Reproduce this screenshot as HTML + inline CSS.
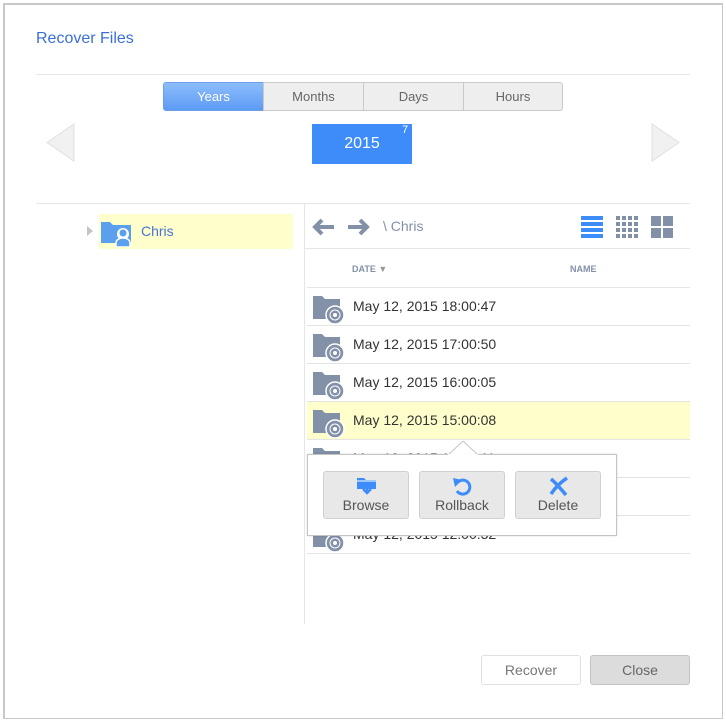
<!DOCTYPE html>
<html><head><meta charset="utf-8"><style>
*{margin:0;padding:0;box-sizing:border-box}
body{width:726px;height:721px;background:#fff;position:relative;overflow:hidden;font-family:"Liberation Sans","DejaVu Sans",sans-serif}
.a{position:absolute}
.frame{left:3px;top:3px;width:720px;height:716px;border:2px solid #c8c8c8;border-right-width:1px;border-bottom-width:1px}
.hl{height:1px;background:#e6e6e6}
.tab{top:82px;height:29px;border:1px solid #c9c9c9;background:#eeeeee;color:#666;font-size:13px;text-align:center;line-height:27px}
.row{left:307px;width:383px;height:38px;border-bottom:1px solid #e4e4e4}
.row span{position:absolute;left:46px;top:10px;font-size:14px;color:#333}
.row svg{position:absolute;left:6px;top:8px}
.pb{top:471px;width:86px;height:48px;border:1px solid #d0d0d0;border-radius:3px;background:#e8e8e8;text-align:center;font-size:14px;color:#555}
.pb span{position:absolute;left:0;right:0;top:25px}
.pb svg{position:absolute;left:32px;top:4px}
</style></head><body>
<div class="a frame"></div>
<div class="a" style="left:36px;top:30px;font-size:16px;color:#3b6fd8">Recover Files</div>
<div class="a hl" style="left:36px;top:74px;width:654px"></div>

<div class="a tab" style="left:163px;width:101px;background:linear-gradient(#8dbdfc,#5c9bf4);color:#fff;border-color:#6a9ee8;border-radius:3px 0 0 3px">Years</div>
<div class="a tab" style="left:263px;width:101px">Months</div>
<div class="a tab" style="left:363px;width:101px">Days</div>
<div class="a tab" style="left:463px;width:100px;border-radius:0 3px 3px 0">Hours</div>

<svg class="a" style="left:46px;top:123px" width="30" height="40"><polygon points="28,1 28,38 1,19.5" fill="#f1f1f1" stroke="#e0e0e0"/></svg>
<svg class="a" style="left:651px;top:123px" width="30" height="40"><polygon points="1,1 1,38 28,19.5" fill="#f1f1f1" stroke="#e0e0e0"/></svg>
<div class="a" style="left:312px;top:124px;width:100px;height:40px;background:#3d8cf9;color:#fff;font-size:16px;text-align:center;line-height:40px">2015</div>
<div class="a" style="left:402px;top:124px;color:#fff;font-size:11px">7</div>

<div class="a hl" style="left:36px;top:203px;width:654px"></div>
<div class="a" style="left:304px;top:204px;width:1px;height:420px;background:#e6e6e6"></div>

<svg class="a" style="left:86px;top:225px" width="8" height="12"><polygon points="1,1 7,6 1,11" fill="#c4c4c4"/></svg>
<div class="a" style="left:99px;top:214px;width:194px;height:35px;background:#ffffcc"></div>
<svg class="a" style="left:101px;top:219px" width="32" height="28"><path d="M0 3h9l3 3h18v18h-30z" fill="#5aa0ec"/><circle cx="22" cy="15" r="6" fill="#fff"/><circle cx="22" cy="14" r="3.5" fill="#5aa0ec"/><path d="M15 28v-4c0-3 3-5 7-5s7 2 7 5v4z" fill="#5aa0ec" stroke="#fff" stroke-width="1.5"/></svg>
<div class="a" style="left:141px;top:223px;font-size:14px;color:#4a72d8">Chris</div>

<svg class="a" style="left:312px;top:218px" width="60" height="18"><path d="M2 9h20M10 2l-7 7 7 7" stroke="#8290a8" stroke-width="4" fill="none"/><path d="M36 9h20M48 2l7 7-7 7" stroke="#8290a8" stroke-width="4" fill="none"/></svg>
<div class="a" style="left:383px;top:218px;font-size:14px;color:#8290a8">\ Chris</div>
<svg class="a" style="left:581px;top:216px" width="94" height="23"><g fill="#3d8cf9"><rect x="0" y="0" width="22" height="4"/><rect x="0" y="6" width="22" height="4"/><rect x="0" y="12" width="22" height="4"/><rect x="0" y="18" width="22" height="4"/></g><g fill="#8290a8"><path d="M35 0h4v4h-4zM41 0h4v4h-4zM47 0h4v4h-4zM53 0h4v4h-4zM35 6h4v4h-4zM41 6h4v4h-4zM47 6h4v4h-4zM53 6h4v4h-4zM35 12h4v4h-4zM41 12h4v4h-4zM47 12h4v4h-4zM53 12h4v4h-4zM35 18h4v4h-4zM41 18h4v4h-4zM47 18h4v4h-4zM53 18h4v4h-4z"/><rect x="70" y="0" width="10" height="10"/><rect x="82" y="0" width="10" height="10"/><rect x="70" y="12" width="10" height="10"/><rect x="82" y="12" width="10" height="10"/></g></svg>
<div class="a hl" style="left:305px;top:248px;width:385px"></div>
<div class="a" style="left:352px;top:264px;font-size:9px;font-weight:bold;color:#8290a8">DATE <span style="font-size:9px;color:#999">&#9660;</span></div>
<div class="a" style="left:570px;top:264px;font-size:9px;font-weight:bold;color:#8290a8">NAME</div>
<div class="a hl" style="left:307px;top:287px;width:383px"></div>

<div class="a row" style="top:288px"><svg width="32" height="28"><path d="M0 0h9l3 3h15v20h-27z" fill="#8290a8"/><circle cx="22" cy="19" r="9" fill="#8290a8" stroke="#fff" stroke-width="1.5"/><circle cx="22" cy="19" r="5" fill="none" stroke="#fff"/><circle cx="22" cy="19" r="2" fill="#fff"/></svg><span>May 12, 2015 18:00:47</span></div>
<div class="a row" style="top:326px"><svg width="32" height="28"><path d="M0 0h9l3 3h15v20h-27z" fill="#8290a8"/><circle cx="22" cy="19" r="9" fill="#8290a8" stroke="#fff" stroke-width="1.5"/><circle cx="22" cy="19" r="5" fill="none" stroke="#fff"/><circle cx="22" cy="19" r="2" fill="#fff"/></svg><span>May 12, 2015 17:00:50</span></div>
<div class="a row" style="top:364px"><svg width="32" height="28"><path d="M0 0h9l3 3h15v20h-27z" fill="#8290a8"/><circle cx="22" cy="19" r="9" fill="#8290a8" stroke="#fff" stroke-width="1.5"/><circle cx="22" cy="19" r="5" fill="none" stroke="#fff"/><circle cx="22" cy="19" r="2" fill="#fff"/></svg><span>May 12, 2015 16:00:05</span></div>
<div class="a row" style="top:402px;background:#ffffcc"><svg width="32" height="28"><path d="M0 0h9l3 3h15v20h-27z" fill="#8290a8"/><circle cx="22" cy="19" r="9" fill="#8290a8" stroke="#fff" stroke-width="1.5"/><circle cx="22" cy="19" r="5" fill="none" stroke="#fff"/><circle cx="22" cy="19" r="2" fill="#fff"/></svg><span>May 12, 2015 15:00:08</span></div>
<div class="a row" style="top:440px"><svg width="32" height="28"><path d="M0 0h9l3 3h15v20h-27z" fill="#8290a8"/></svg><span>May 12, 2015 14:00:11</span></div>
<div class="a row" style="top:478px"></div>
<div class="a row" style="top:516px"><svg width="32" height="28"><path d="M0 0h9l3 3h15v20h-27z" fill="#8290a8"/><circle cx="22" cy="19" r="9" fill="#8290a8" stroke="#fff" stroke-width="1.5"/><circle cx="22" cy="19" r="5" fill="none" stroke="#fff"/><circle cx="22" cy="19" r="2" fill="#fff"/></svg><span>May 12, 2015 12:00:32</span></div>

<div class="a" style="left:307px;top:454px;width:310px;height:82px;background:#fff;border:1px solid #c4c4c4;box-shadow:0 0 2px rgba(0,0,0,.15)"></div>
<svg class="a" style="left:448px;top:441px" width="30" height="15"><polygon points="0,14 15,0 30,14" fill="#fff" stroke="#c4c4c4"/><rect x="0" y="13" width="30" height="3" fill="#fff"/></svg>
<div class="a pb" style="left:323px"><svg width="22" height="20"><path d="M1 2h7l2 2h10v9h-19z" fill="#3d8cf9"/><path d="M11 9v8M7 13l4 4 4-4" stroke="#3d8cf9" stroke-width="2.5" fill="none"/><path d="M1 5h19" stroke="#fff"/></svg><span>Browse</span></div>
<div class="a pb" style="left:419px"><svg width="22" height="20"><path d="M6 6a7 7 0 1 1 -1 9" stroke="#3d8cf9" stroke-width="3" fill="none"/><polygon points="1,2 10,4 3,11" fill="#3d8cf9"/></svg><span>Rollback</span></div>
<div class="a pb" style="left:515px"><svg width="22" height="20"><path d="M3 3c5 4 10 10 15 16M19 2c-6 4-12 10-16 16" stroke="#3d8cf9" stroke-width="3.5" fill="none"/></svg><span>Delete</span></div>

<div class="a" style="left:481px;top:655px;width:100px;height:30px;border:1px solid #e0e0e0;border-radius:3px;text-align:center;line-height:28px;font-size:14px;color:#777">Recover</div>
<div class="a" style="left:590px;top:655px;width:100px;height:30px;border:1px solid #c4c4c4;border-radius:3px;background:#dcdcdc;text-align:center;line-height:28px;font-size:14px;color:#666">Close</div>
</body></html>
